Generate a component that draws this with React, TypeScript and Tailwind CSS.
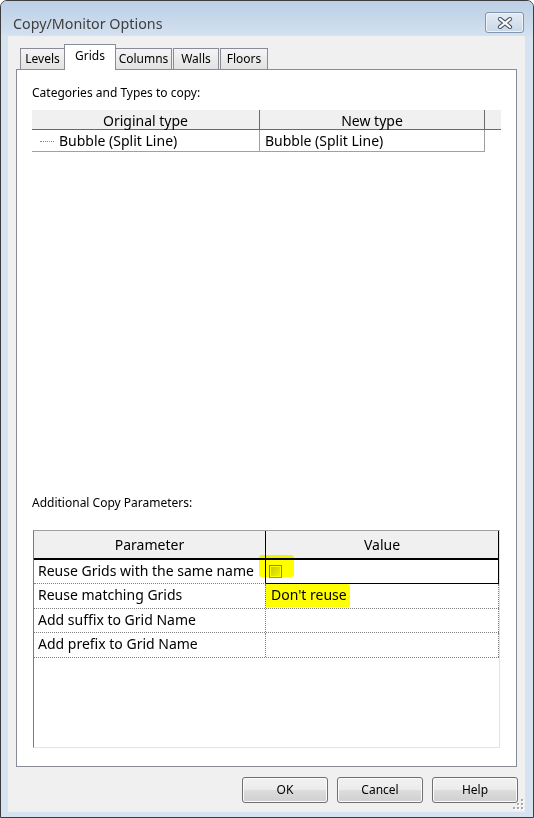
import React from "react";

function Tab({ label, w, selected }: { label: string; w: string; selected?: boolean }) {
  if (selected) {
    return (
      <div
        className={`${w} h-[26px] -mb-[1px] border border-b-0 border-[#898c95] bg-white text-center text-[12px] leading-[16px] pt-[3px]`}
      >
        {label}
      </div>
    );
  }
  return (
    <div
      className={`${w} h-[21px] border border-b-0 border-[#898c95] bg-linear-to-b from-[#f4f4f4] to-[#e2e2e2] text-center text-[12px] leading-[16px] pt-[2px]`}
    >
      {label}
    </div>
  );
}

function Button({ label }: { label: string }) {
  return (
    <div className="w-[86px] h-[26px] rounded-[3px] border border-[#707070] bg-[linear-gradient(#f2f2f2_0%,#ebebeb_50%,#dddddd_50%,#cfcfcf_100%)] shadow-[inset_0_0_0_1px_#fbfbfb] flex items-center justify-center text-[12px] text-black">
      {label}
    </div>
  );
}

export default function App() {
  return (
    <div className="w-[534px] h-[818px] flex flex-col border border-[#3d3d3d] rounded-t-[7px] bg-[#d6e3f1] font-['Noto_Sans',sans-serif] text-black overflow-hidden">
      {/* Title bar */}
      <div className="h-[35px] shrink-0 flex items-start bg-linear-to-b from-[#bccfe5] to-[#d3e1f0]">
        <div className="ml-[12px] mt-[14px] text-[14.3px] leading-[18px] text-[#3e3e3e]">
          Copy/Monitor Options
        </div>
        <div className="ml-auto mt-[11px] mr-[9px] w-[39px] h-[21px] rounded-[3px] border border-[#8396ae] bg-linear-to-b from-[#e4ecf5] to-[#c9d7e7] shadow-[inset_0_0_0_1px_#eef3f9] flex items-center justify-center">
          <svg width="16" height="12" viewBox="0 0 16 12">
            <path d="M3 2 L13 10 M13 2 L3 10" stroke="#4b5868" strokeWidth="4.2" strokeLinecap="round" fill="none" />
            <path d="M3 2 L13 10 M13 2 L3 10" stroke="#ffffff" strokeWidth="2.2" strokeLinecap="round" fill="none" />
          </svg>
        </div>
      </div>

      {/* Client */}
      <div className="ml-[7px] mr-[8px] h-[776px] shrink-0 bg-[#f0f0f0] flex flex-col relative">
        {/* Tabs */}
        <div className="mt-[8px] ml-[12px] h-[25px] flex items-end relative z-10">
          <Tab label="Levels" w="w-[45px]" />
          <div className="-ml-[1px]">
            <Tab label="Grids" w="w-[52px]" selected />
          </div>
          <div className="-ml-[1px]">
            <Tab label="Columns" w="w-[57px]" />
          </div>
          <div className="ml-[1px]">
            <Tab label="Walls" w="w-[46px]" />
          </div>
          <div className="ml-[1px]">
            <Tab label="Floors" w="w-[48px]" />
          </div>
        </div>

        {/* Panel */}
        <div className="mx-[8px] h-[698px] border border-[#898c95] bg-white flex flex-col px-[15px]">
          <div className="mt-[15px] text-[12px] leading-[16px]">Categories and Types to copy:</div>

          {/* Table 1 */}
          <div className="mt-[9px] w-[469px] text-[14px]">
            <div className="flex h-[20px] bg-[#f0f0f0] border-b border-[#6a6a6a]">
              <div className="w-[228px] border-r border-[#6a6a6a] text-center leading-[19px] pt-[1px]">
                Original type
              </div>
              <div className="w-[225px] border-r border-[#6a6a6a] text-center leading-[19px] pt-[1px]">
                New type
              </div>
              <div className="flex-1" />
            </div>
            <div className="flex h-[22px] w-[453px] border-b border-[#a0a0a0]">
              <div className="w-[228px] border-r border-[#a0a0a0] flex items-center pl-[8px] leading-[20px] pt-[1px]">
                <span className="w-[14px] border-t border-dotted border-[#8a8a8a] mr-[5px]" />
                Bubble (Split Line)
              </div>
              <div className="w-[225px] border-r border-[#a0a0a0] flex items-center pl-[5px] leading-[20px]">
                Bubble (Split Line)
              </div>
            </div>
          </div>

          <div className="mt-[343px] text-[12px] leading-[16px]">Additional Copy Parameters:</div>

          {/* Table 2 */}
          <div className="mt-[19px] ml-[1px] w-[467px] h-[218px] border border-t-[#a0a0a0] border-l-[#7a7a7a] border-r-[#e3e3e3] border-b-[#e3e3e3] relative text-[14px]">
            <div className="flex h-[29px] bg-[#f0f0f0] border-b-2 border-black">
              <div className="w-[232px] border-r border-black text-center leading-[20px] pt-[4px]">Parameter</div>
              <div className="flex-1 border-r border-black text-center leading-[20px] pt-[4px]">Value</div>
            </div>

            {/* Row 1 */}
            <div className="flex h-[24px]">
              <div className="w-[232px] border-r border-black border-b border-b-[#808080] border-dotted [border-right-style:solid] flex items-center pl-[4px] pb-[3px]">
                Reuse Grids with the same name
              </div>
              <div className="flex-1 border-r border-b border-black flex items-center pl-[3px]">
                <div className="w-[13px] h-[13px] border border-[#8e8f8f] bg-white p-[1px]">
                  <div className="w-full h-full bg-linear-to-br from-[#c8ccd2] to-[#f4f4f4]" />
                </div>
              </div>
            </div>
            {/* Row 2 */}
            <div className="flex h-[25px] border-b border-dotted border-[#808080]">
              <div className="w-[232px] border-r border-dotted border-[#808080] flex items-center pl-[4px] pb-[3px]">
                Reuse matching Grids
              </div>
              <div className="flex-1 border-r border-dotted border-[#808080] flex items-center pl-[5px] pb-[3px]">
                Don't reuse
              </div>
            </div>
            {/* Row 3 */}
            <div className="flex h-[24px] border-b border-dotted border-[#808080]">
              <div className="w-[232px] border-r border-dotted border-[#808080] flex items-center pl-[4px] pb-[3px]">
                Add suffix to Grid Name
              </div>
              <div className="flex-1 border-r border-dotted border-[#808080]" />
            </div>
            {/* Row 4 */}
            <div className="flex h-[25px] border-b border-dotted border-[#808080]">
              <div className="w-[232px] border-r border-dotted border-[#808080] flex items-center pl-[4px] pb-[3px]">
                Add prefix to Grid Name
              </div>
              <div className="flex-1 border-r border-dotted border-[#808080]" />
            </div>

            {/* Highlighter marks */}
            <div className="absolute left-[225px] top-[24px] w-[35px] h-[22px] rounded-[3px] bg-[#ffff00] mix-blend-multiply" />
            <div className="absolute left-[231px] top-[53px] w-[85px] h-[23px] rounded-[2px] bg-[#ffff00] mix-blend-multiply" />
          </div>
        </div>

        {/* Buttons */}
        <div className="mt-[10px] mr-[7px] flex justify-end gap-[9px]">
          <Button label="OK" />
          <Button label="Cancel" />
          <Button label="Help" />
        </div>

        {/* Resize grip */}
        <svg className="absolute right-[1px] bottom-[2px]" width="12" height="12" viewBox="0 0 12 12">
          {[
            [9, 1],
            [5, 5],
            [9, 5],
            [1, 9],
            [5, 9],
            [9, 9],
          ].map(([x, y], i) => (
            <g key={i}>
              <rect x={x + 1} y={y + 1} width="2" height="2" fill="#ffffff" />
              <rect x={x} y={y} width="2" height="2" fill="#a8a8a8" />
            </g>
          ))}
        </svg>
      </div>
    </div>
  );
}
